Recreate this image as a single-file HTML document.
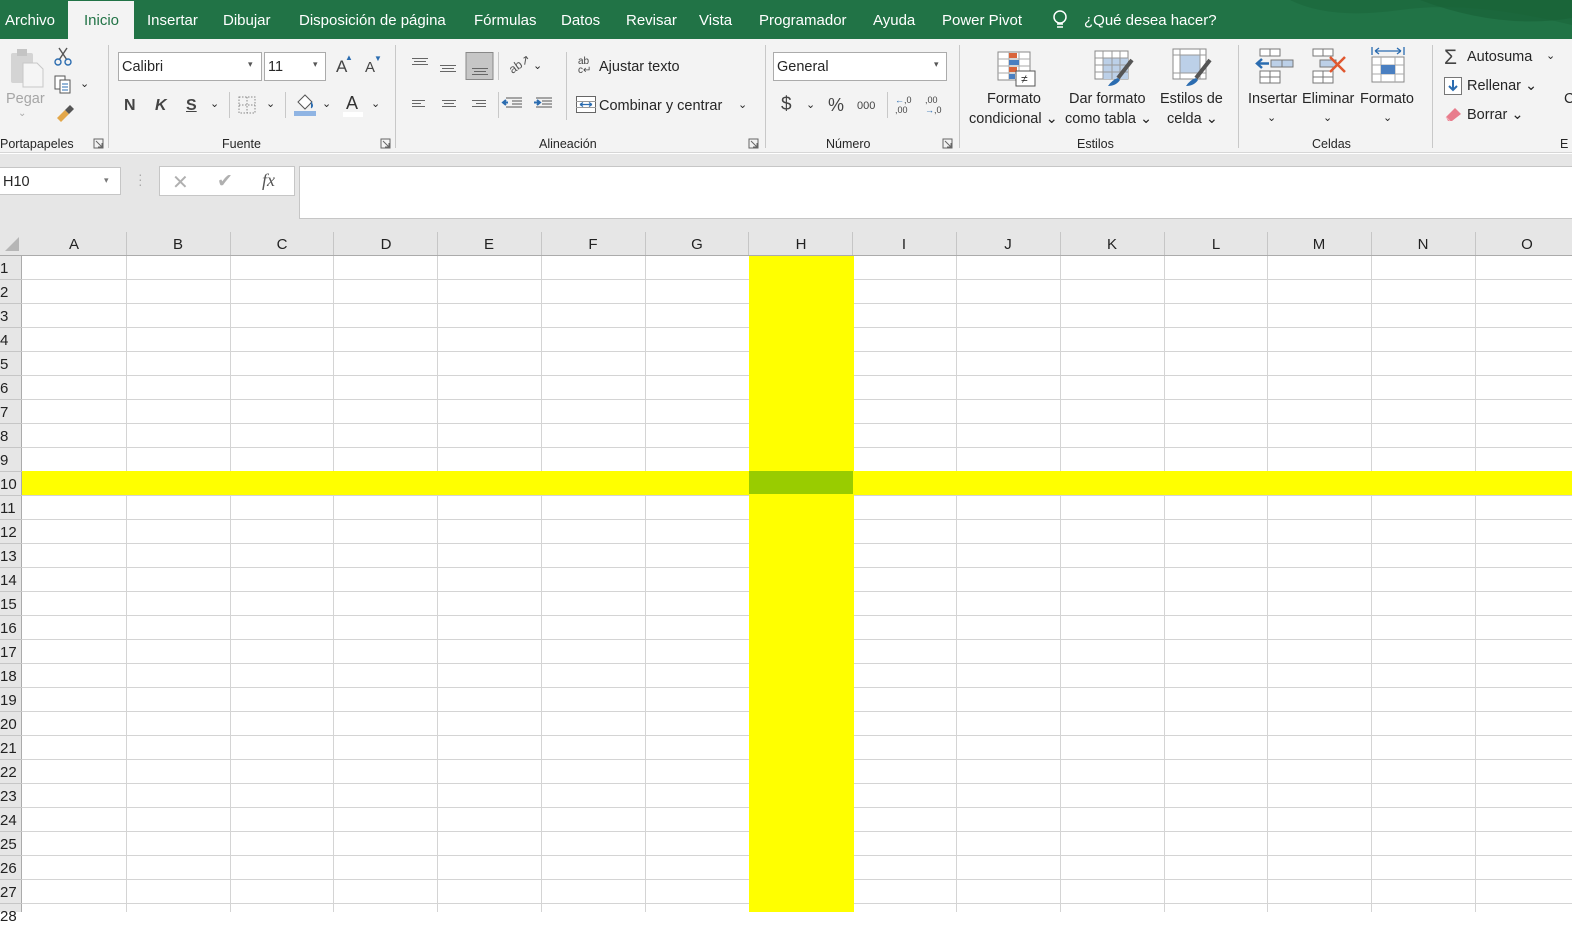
<!DOCTYPE html>
<html><head><meta charset="utf-8"><style>
*{margin:0;padding:0;box-sizing:border-box}
body{width:1572px;height:912px;overflow:hidden;position:relative;background:#fff;font-family:"Liberation Sans",sans-serif;color:#262626}
.a{position:absolute;white-space:nowrap}
.tab{position:absolute;top:12px;font-size:15px;color:#fff}
.r{font-size:14.5px;color:#262626;margin-top:1px}
.g{font-size:12.5px;color:#262626;margin-top:1px}
.sep{position:absolute;width:1px;background:#c8c8c8}
.box{position:absolute;background:#fff;border:1px solid #ababab}
.ch{position:absolute;top:236px;font-size:15px;color:#222;width:104px;text-align:center}
.rh{position:absolute;left:0;font-size:15px;color:#222;width:21px;overflow:hidden;direction:rtl;text-align:left}
.vl{position:absolute;top:256px;width:1px;height:656px;background:#d4d4d4}
.hv{position:absolute;top:232px;width:1px;height:23px;background:#c6c6c6}
.ln{stroke:#666;stroke-width:1}
</style></head><body>
<div class="a" style="left:0;top:0;width:1572px;height:39px;background:#217346"></div>
<svg class="a" style="left:1250px;top:0" width="322" height="39"><path d="M40 0 Q80 20 150 10 Q220 0 322 25 L322 0Z" fill="#1d6b3f"/><path d="M170 0 Q250 30 322 18 L322 0Z" fill="#1a6238" opacity=".7"/></svg>
<div class="a" style="left:68px;top:1px;width:66px;height:38px;background:#f3f3f3"></div>
<div class="tab" style="left:5px">Archivo</div>
<div class="tab" style="left:84px;color:#217346">Inicio</div>
<div class="tab" style="left:147px">Insertar</div>
<div class="tab" style="left:223px">Dibujar</div>
<div class="tab" style="left:299px">Disposición de página</div>
<div class="tab" style="left:474px">Fórmulas</div>
<div class="tab" style="left:561px">Datos</div>
<div class="tab" style="left:626px">Revisar</div>
<div class="tab" style="left:699px">Vista</div>
<div class="tab" style="left:759px">Programador</div>
<div class="tab" style="left:873px">Ayuda</div>
<div class="tab" style="left:942px">Power Pivot</div>
<svg class="a" style="left:1051px;top:9px" width="18" height="22"><circle cx="9" cy="8" r="6" fill="none" stroke="#fff" stroke-width="1.5"/><path d="M6 15h6M6 18h6" stroke="#fff" stroke-width="1.5"/></svg>
<div class="tab" style="left:1084px">¿Qué desea hacer?</div>
<div class="a" style="left:0;top:39px;width:1572px;height:114px;background:#f3f3f3;border-bottom:1px solid #d6d6d6"></div>
<svg class="a" style="left:9px;top:47px" width="38" height="42"><rect x="2" y="6" width="22" height="30" rx="2" fill="#d4d4d4"/><rect x="8" y="2" width="10" height="7" fill="#c4c4c4"/><path d="M14 16h14l6 6v18H14z" fill="#f5f5f5" stroke="#c8c8c8"/></svg>
<div class="a r" style="left:6px;top:90px;color:#a6a6a6">Pegar</div>
<div class="a" style="left:18px;top:108px;font-size:10px;color:#aaa">⌄</div>
<svg class="a" style="left:53px;top:46px" width="20" height="20"><path d="M6 2l8 12M14 2L6 14" stroke="#555" stroke-width="1.4"/><circle cx="5" cy="16" r="3" fill="none" stroke="#2b6cb0" stroke-width="1.4"/><circle cx="15" cy="16" r="3" fill="none" stroke="#2b6cb0" stroke-width="1.4"/></svg>
<svg class="a" style="left:54px;top:75px" width="20" height="20"><rect x="1" y="1" width="10" height="13" fill="#fff" stroke="#555"/><rect x="6" y="5" width="10" height="13" fill="#fff" stroke="#555"/><path d="M8 9h6M8 12h6M8 15h6" stroke="#2b6cb0"/></svg>
<div class="a" style="left:80px;top:77px;font-size:11px">⌄</div>
<svg class="a" style="left:55px;top:104px" width="20" height="18"><path d="M2 14l8-8 4 4-8 8z" fill="#e3a74a"/><path d="M10 6l5-5 4 4-5 5" fill="#555"/></svg>
<div class="a g" style="left:0;top:136px">Portapapeles</div>
<svg class="a" style="left:93px;top:138px" width="11" height="11"><path d="M1 1h9v9H1z" fill="none" stroke="#666"/><path d="M3 3l6 6M9 5v4H5" stroke="#666" fill="none"/></svg>
<div class="sep" style="left:108px;top:45px;height:103px"></div>
<div class="box" style="left:118px;top:52px;width:144px;height:29px"></div>
<div class="a r" style="left:122px;top:58px">Calibri</div>
<div class="a" style="left:248px;top:59px;font-size:9px;color:#555">▾</div>
<div class="box" style="left:264px;top:52px;width:62px;height:29px"></div>
<div class="a r" style="left:268px;top:58px">11</div>
<div class="a" style="left:313px;top:59px;font-size:9px;color:#555">▾</div>
<div class="a" style="left:336px;top:57px;font-size:17px;color:#444">A</div><div class="a" style="left:345px;top:53px;font-size:8px;color:#2b6cb0">▲</div>
<div class="a" style="left:365px;top:59px;font-size:15px;color:#444">A</div><div class="a" style="left:374px;top:54px;font-size:8px;color:#2b6cb0">▼</div>
<div class="a" style="left:124px;top:97px;font-size:16px;font-weight:bold;color:#444">N</div>
<div class="a" style="left:155px;top:97px;font-size:16px;font-weight:bold;font-style:italic;color:#444">K</div>
<div class="a" style="left:186px;top:97px;font-size:16px;font-weight:bold;text-decoration:underline;color:#444">S</div>
<div class="a" style="left:210px;top:97px;font-size:11px">⌄</div>
<div class="sep" style="left:229px;top:92px;height:26px"></div>
<svg class="a" style="left:238px;top:96px" width="18" height="18"><rect x="1" y="1" width="16" height="16" fill="none" stroke="#888" stroke-dasharray="1.5 1.5"/><path d="M9 1v16M1 9h16" stroke="#888" stroke-dasharray="1.5 1.5"/></svg>
<div class="a" style="left:266px;top:97px;font-size:11px">⌄</div>
<div class="sep" style="left:285px;top:92px;height:26px"></div>
<svg class="a" style="left:294px;top:92px" width="22" height="24"><path d="M4 10l7-7 7 7-7 7z" fill="#fff" stroke="#555"/><path d="M17 10q3 4 0 6" stroke="#2b6cb0" fill="#2b6cb0"/><rect x="0" y="19" width="22" height="5" fill="#8fb4e3"/></svg>
<div class="a" style="left:322px;top:97px;font-size:11px">⌄</div>
<div class="a" style="left:346px;top:93px;font-size:18px;color:#333">A</div>
<div class="a" style="left:343px;top:112px;width:20px;height:5px;background:#fff"></div>
<div class="a" style="left:371px;top:97px;font-size:11px">⌄</div>
<div class="a g" style="left:222px;top:136px">Fuente</div>
<svg class="a" style="left:380px;top:138px" width="11" height="11"><path d="M1 1h9v9H1z" fill="none" stroke="#666"/><path d="M3 3l6 6M9 5v4H5" stroke="#666" fill="none"/></svg>
<div class="sep" style="left:395px;top:45px;height:103px"></div>
<svg class="a" style="left:408px;top:52px" width="150" height="70">
<path class="ln" d="M4 6.5h16M6 9.5h12M4 12.5h16"/>
<path class="ln" d="M32 13.5h16M34 16.5h12M32 19.5h16"/>
<rect x="58" y="0.5" width="27" height="27" fill="#c6c6c6" stroke="#888"/>
<path class="ln" d="M64 16.5h16M66 19.5h12M64 22.5h16"/>
<path class="ln" d="M4 48.5h13M4 51.5h9M4 54.5h13"/>
<path class="ln" d="M34 48.5h14M36 51.5h10M34 54.5h14"/>
<path class="ln" d="M64 48.5h14M68 51.5h10M64 54.5h14"/>
<path d="M98 46h16M104 49h10M104 52h10M98 55h16" stroke="#555"/><path d="M100 50.5l-4 0M98 48l-3 2.5 3 2.5" stroke="#2b6cb0" stroke-width="2" fill="none"/>
<path d="M128 46h16M134 49h10M134 52h10M128 55h16" stroke="#555"/><path d="M126 50.5h5M129 48l3 2.5-3 2.5" stroke="#2b6cb0" stroke-width="2" fill="none"/>
</svg>
<div class="sep" style="left:498px;top:52px;height:28px"></div>
<div class="sep" style="left:498px;top:92px;height:26px"></div>
<div class="a" style="left:508px;top:57px;font-size:12px;color:#555;transform:rotate(-35deg)">ab↗</div>
<div class="a" style="left:533px;top:59px;font-size:11px">⌄</div>
<div class="sep" style="left:566px;top:52px;height:68px"></div>
<div class="a" style="left:578px;top:57px;font-size:10px;line-height:9px;color:#444">ab<br>c↵</div>
<div class="a r" style="left:599px;top:58px">Ajustar texto</div>
<svg class="a" style="left:576px;top:96px" width="20" height="17"><rect x="0.5" y="0.5" width="19" height="16" fill="#fff" stroke="#666"/><path d="M0 5.5h20M0 11.5h20" stroke="#999"/><path d="M4 8.5h12M4 8.5l3-2M4 8.5l3 2M16 8.5l-3-2M16 8.5l-3 2" stroke="#2b6cb0" stroke-width="1.3"/></svg>
<div class="a r" style="left:599px;top:97px">Combinar y centrar</div>
<div class="a" style="left:738px;top:98px;font-size:11px">⌄</div>
<div class="a g" style="left:539px;top:136px">Alineación</div>
<svg class="a" style="left:748px;top:138px" width="11" height="11"><path d="M1 1h9v9H1z" fill="none" stroke="#666"/><path d="M3 3l6 6M9 5v4H5" stroke="#666" fill="none"/></svg>
<div class="sep" style="left:765px;top:45px;height:103px"></div>
<div class="box" style="left:773px;top:52px;width:174px;height:29px"></div>
<div class="a r" style="left:777px;top:58px">General</div>
<div class="a" style="left:934px;top:59px;font-size:9px;color:#555">▾</div>
<div class="a" style="left:781px;top:94px;font-size:19px;color:#444">$</div>
<div class="a" style="left:806px;top:98px;font-size:11px">⌄</div>
<div class="a" style="left:828px;top:95px;font-size:18px;color:#444">%</div>
<div class="a" style="left:857px;top:100px;font-size:11px;color:#444">000</div>
<div class="sep" style="left:887px;top:92px;height:26px"></div>
<div class="a" style="left:895px;top:95px;font-size:9px;line-height:10px;color:#444"><span style="color:#2b6cb0">←</span>,0<br>,00</div>
<div class="a" style="left:925px;top:95px;font-size:9px;line-height:10px;color:#444">,00<br><span style="color:#2b6cb0">→</span>,0</div>
<div class="a g" style="left:826px;top:136px">Número</div>
<svg class="a" style="left:942px;top:138px" width="11" height="11"><path d="M1 1h9v9H1z" fill="none" stroke="#666"/><path d="M3 3l6 6M9 5v4H5" stroke="#666" fill="none"/></svg>
<div class="sep" style="left:959px;top:45px;height:103px"></div>
<svg class="a" style="left:997px;top:50px" width="40" height="38"><rect x="1" y="2" width="32" height="28" fill="#fff" stroke="#888"/><path d="M1 9h32M1 16h32M1 23h32M12 2v28M22 2v28" stroke="#aaa"/><rect x="12" y="3" width="8" height="5" fill="#d9643a"/><rect x="12" y="10" width="10" height="5" fill="#4a7fc1"/><rect x="12" y="17" width="8" height="5" fill="#d9643a"/><rect x="12" y="24" width="6" height="5" fill="#4a7fc1"/><rect x="19" y="21" width="19" height="15" fill="#fff" stroke="#555"/><text x="24" y="33" font-size="12" fill="#333">≠</text></svg>
<div class="a r" style="left:987px;top:90px">Formato</div>
<div class="a r" style="left:969px;top:110px">condicional ⌄</div>
<svg class="a" style="left:1094px;top:50px" width="40" height="38"><rect x="1" y="1" width="33" height="28" fill="#fff" stroke="#888"/><rect x="9" y="8" width="25" height="21" fill="#bcd0e8"/><path d="M1 8h33M1 15h33M1 22h33M9 1v28M18 1v28M26 1v28" stroke="#999"/><path d="M38 10l-14 18" stroke="#555" stroke-width="4"/><path d="M24 28q-6 2-10 8q8 0 12-6z" fill="#2b6cb0"/></svg>
<div class="a r" style="left:1069px;top:90px">Dar formato</div>
<div class="a r" style="left:1065px;top:110px">como tabla ⌄</div>
<svg class="a" style="left:1172px;top:48px" width="40" height="40"><rect x="1" y="1" width="33" height="30" fill="#fff" stroke="#888"/><rect x="8" y="7" width="20" height="18" fill="#bcd0e8"/><path d="M1 7h33M1 25h33M8 1v30M28 1v30" stroke="#999"/><path d="M38 12l-14 18" stroke="#555" stroke-width="4"/><path d="M24 30q-6 2-10 8q8 0 12-6z" fill="#2b6cb0"/></svg>
<div class="a r" style="left:1160px;top:90px">Estilos de</div>
<div class="a r" style="left:1167px;top:110px">celda ⌄</div>
<div class="a g" style="left:1077px;top:136px">Estilos</div>
<div class="sep" style="left:1238px;top:45px;height:103px"></div>
<svg class="a" style="left:1255px;top:48px" width="40" height="36"><rect x="5" y="1" width="20" height="7" fill="#fff" stroke="#777"/><path d="M15 1v7" stroke="#777"/><rect x="16" y="12" width="22" height="7" fill="#bcd0e8" stroke="#777"/><path d="M27 12v7" stroke="#777"/><path d="M14 15.5H2M7 11l-5 4.5 5 4.5" stroke="#2b6cb0" stroke-width="2.5" fill="none"/><rect x="5" y="23" width="20" height="12" fill="#fff" stroke="#777"/><path d="M5 29h20M15 23v12" stroke="#777"/></svg>
<div class="a r" style="left:1248px;top:90px">Insertar</div>
<div class="a" style="left:1267px;top:111px;font-size:11px">⌄</div>
<svg class="a" style="left:1312px;top:48px" width="40" height="36"><rect x="1" y="1" width="20" height="7" fill="#fff" stroke="#777"/><path d="M11 1v7" stroke="#777"/><rect x="8" y="12" width="16" height="7" fill="#bcd0e8" stroke="#777"/><rect x="1" y="23" width="20" height="12" fill="#fff" stroke="#777"/><path d="M1 29h20M11 23v12" stroke="#777"/><path d="M18 9l15 15M33 9L18 24" stroke="#e0572f" stroke-width="2.5"/></svg>
<div class="a r" style="left:1302px;top:90px">Eliminar</div>
<div class="a" style="left:1323px;top:111px;font-size:11px">⌄</div>
<svg class="a" style="left:1370px;top:46px" width="38" height="40"><path d="M5 5h26M5 5l4-3M5 5l4 3M31 5l-4-3M31 5l-4 3M2 1v8M34 1v8" stroke="#2b6cb0" stroke-width="1.3" fill="none"/><rect x="2" y="11" width="32" height="25" fill="#fff" stroke="#888"/><path d="M2 19h32M2 28h32M11 11v25M25 11v25" stroke="#aaa"/><rect x="11" y="19" width="14" height="9" fill="#4a7fc1"/></svg>
<div class="a r" style="left:1360px;top:90px">Formato</div>
<div class="a" style="left:1383px;top:111px;font-size:11px">⌄</div>
<div class="a g" style="left:1312px;top:136px">Celdas</div>
<div class="sep" style="left:1432px;top:45px;height:103px"></div>
<div class="a" style="left:1444px;top:46px;font-size:21px;color:#444">Σ</div>
<div class="a r" style="left:1467px;top:48px">Autosuma</div>
<div class="a" style="left:1546px;top:49px;font-size:11px">⌄</div>
<svg class="a" style="left:1444px;top:77px" width="18" height="18"><rect x="0.5" y="0.5" width="17" height="17" fill="#fff" stroke="#777"/><path d="M9 3v10M5 9l4 4 4-4" stroke="#2b6cb0" stroke-width="2" fill="none"/></svg>
<div class="a r" style="left:1467px;top:77px">Rellenar ⌄</div>
<svg class="a" style="left:1444px;top:106px" width="20" height="16"><path d="M2 11l9-9 6 6-9 7H4z" fill="#e87c8c"/><path d="M2 11l4 4" stroke="#f2b0ba"/></svg>
<div class="a r" style="left:1467px;top:106px">Borrar ⌄</div>
<div class="a g" style="left:1560px;top:136px">E</div>
<div class="a r" style="left:1564px;top:90px">C</div>
<div class="a" style="left:0;top:154px;width:1572px;height:78px;background:#e6e6e6"></div>
<div class="a" style="left:0;top:167px;width:121px;height:28px;background:#fff;border:1px solid #c6c6c6;border-left:none"></div>
<div class="a r" style="left:3px;top:173px">H10</div>
<div class="a" style="left:104px;top:175px;font-size:9px;color:#777">▾</div>
<div class="a" style="left:138px;top:172px;font-size:14px;color:#aaa;line-height:5px">·<br>·<br>·</div>
<div class="a" style="left:159px;top:166px;width:136px;height:30px;background:#fff;border:1px solid #c6c6c6"></div>
<div class="a" style="left:172px;top:170px;font-size:20px;color:#b0b0b0">✕</div>
<div class="a" style="left:217px;top:170px;font-size:19px;color:#b0b0b0">✔</div>
<div class="a" style="left:262px;top:170px;font-size:18px;font-style:italic;font-family:'Liberation Serif',serif;color:#555">fx</div>
<div class="a" style="left:299px;top:166px;width:1280px;height:53px;background:#fff;border:1px solid #c6c6c6"></div>
<div class="a" style="left:0;top:232px;width:1572px;height:24px;background:#e6e6e6;border-bottom:1px solid #ababab"></div>
<svg class="a" style="left:4px;top:236px" width="16" height="16"><path d="M15 1v14H1z" fill="#b6b6b6"/></svg>
<div class="a" style="left:0;top:256px;width:22px;height:656px;background:#e6e6e6;border-right:1px solid #ababab"></div>
<div class="a" style="left:22px;top:256px;width:1550px;height:656px;background-image:repeating-linear-gradient(to bottom,transparent 0,transparent 23px,#d4d4d4 23px,#d4d4d4 24px)"></div>
<div class="a" style="left:0;top:256px;width:22px;height:656px;background-image:repeating-linear-gradient(to bottom,transparent 0,transparent 23px,#c6c6c6 23px,#c6c6c6 24px)"></div>
<div class="vl" style="left:126px"></div><div class="vl" style="left:230px"></div><div class="vl" style="left:333px"></div><div class="vl" style="left:437px"></div><div class="vl" style="left:541px"></div><div class="vl" style="left:645px"></div><div class="vl" style="left:956px"></div><div class="vl" style="left:1060px"></div><div class="vl" style="left:1164px"></div><div class="vl" style="left:1267px"></div><div class="vl" style="left:1371px"></div><div class="vl" style="left:1475px"></div>
<div class="hv" style="left:126px"></div><div class="hv" style="left:230px"></div><div class="hv" style="left:333px"></div><div class="hv" style="left:437px"></div><div class="hv" style="left:541px"></div><div class="hv" style="left:645px"></div><div class="hv" style="left:748px"></div><div class="hv" style="left:852px"></div><div class="hv" style="left:956px"></div><div class="hv" style="left:1060px"></div><div class="hv" style="left:1164px"></div><div class="hv" style="left:1267px"></div><div class="hv" style="left:1371px"></div><div class="hv" style="left:1475px"></div>
<div class="a" style="left:749px;top:256px;width:105px;height:656px;background:#ffff00"></div>
<div class="a" style="left:22px;top:471px;width:1550px;height:24px;background:#ffff00"></div>
<div class="a" style="left:749px;top:471px;width:104px;height:23px;background:#99cc00"></div>
<div class="ch" style="left:22px">A</div><div class="ch" style="left:126px">B</div><div class="ch" style="left:230px">C</div><div class="ch" style="left:334px">D</div><div class="ch" style="left:437px">E</div><div class="ch" style="left:541px">F</div><div class="ch" style="left:645px">G</div><div class="ch" style="left:749px">H</div><div class="ch" style="left:852px">I</div><div class="ch" style="left:956px">J</div><div class="ch" style="left:1060px">K</div><div class="ch" style="left:1164px">L</div><div class="ch" style="left:1267px">M</div><div class="ch" style="left:1371px">N</div><div class="ch" style="left:1475px">O</div>
<div class="rh" style="top:260px">1</div><div class="rh" style="top:284px">2</div><div class="rh" style="top:308px">3</div><div class="rh" style="top:332px">4</div><div class="rh" style="top:356px">5</div><div class="rh" style="top:380px">6</div><div class="rh" style="top:404px">7</div><div class="rh" style="top:428px">8</div><div class="rh" style="top:452px">9</div><div class="rh" style="top:476px">10</div><div class="rh" style="top:500px">11</div><div class="rh" style="top:524px">12</div><div class="rh" style="top:548px">13</div><div class="rh" style="top:572px">14</div><div class="rh" style="top:596px">15</div><div class="rh" style="top:620px">16</div><div class="rh" style="top:644px">17</div><div class="rh" style="top:668px">18</div><div class="rh" style="top:692px">19</div><div class="rh" style="top:716px">20</div><div class="rh" style="top:740px">21</div><div class="rh" style="top:764px">22</div><div class="rh" style="top:788px">23</div><div class="rh" style="top:812px">24</div><div class="rh" style="top:836px">25</div><div class="rh" style="top:860px">26</div><div class="rh" style="top:884px">27</div><div class="rh" style="top:908px">28</div>
</body></html>
